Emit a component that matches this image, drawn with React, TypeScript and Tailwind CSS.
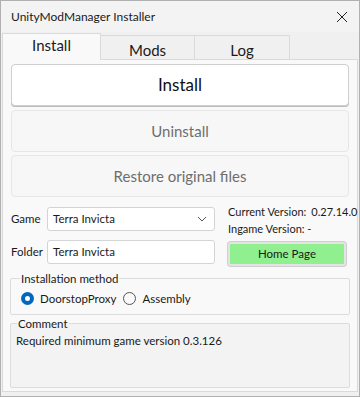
import React, { useState } from 'react';

const font = { fontFamily: 'Lato, "Liberation Sans", Arial, sans-serif' };

export default function App() {
  const [tab, setTab] = useState('Install');
  const [method, setMethod] = useState('DoorstopProxy');

  const tabs = ['Install', 'Mods', 'Log'];

  return (
    <div
      className="w-[360px] h-[397px] bg-[#f0f0f0] text-[#1a1a1a] flex flex-col overflow-hidden border border-[#b0b0b0]"
      style={font}
    >
      {/* title bar */}
      <div className="h-[31px] flex items-center justify-between pl-[10px] pr-[10px] bg-[#f3f3f3] shrink-0">
        <span className="text-[12px] text-[#1a1a1a]">UnityModManager Installer</span>
        <svg width="12" height="12" viewBox="0 0 12 12" className="mr-[1px]">
          <path d="M1 1 L11 11 M11 1 L1 11" stroke="#222" strokeWidth="1" />
        </svg>
      </div>

      {/* tabs */}
      <div className="flex items-end pl-[1px] h-[27px] shrink-0">
        {tabs.map((t) => (
          <button
            key={t}
            onClick={() => setTab(t)}
            className={
              t === tab
                ? 'w-[99px] h-[27px] bg-[#f9f9f9] border border-b-0 border-[#dadada] text-[15px] relative z-10 -mb-[1px] pb-[3px]'
                : t === 'Mods'
                ? 'w-[94px] h-[24px] bg-[#f0f0f0] border border-b-0 border-l-0 border-[#dadada] text-[15px] pt-[3px]'
                : 'w-[95px] h-[24px] bg-[#f0f0f0] border border-b-0 border-l-0 border-[#dadada] text-[15px] pt-[3px]'
            }
          >
            {t}
          </button>
        ))}
      </div>

      {/* tab page */}
      <div className="flex-1 mx-[1px] mb-[4px] bg-[#f9f9f9] border border-[#dadada] px-[8px] pt-[4px] flex flex-col">
        <button className="h-[42px] w-full bg-white border border-[#cfcfcf] rounded-[4px] shadow-[0_1px_0_#bdbdbd] text-[17px] text-[#111]">
          Install
        </button>
        <button className="mt-[4px] h-[42px] w-full bg-[#f7f7f7] border border-[#e6e6e6] rounded-[4px] text-[15px] text-[#6e6e6e]">
          Uninstall
        </button>
        <button className="mt-[3px] h-[42px] w-full bg-[#f7f7f7] border border-[#e6e6e6] rounded-[4px] text-[15px] text-[#6e6e6e]">
          Restore original files
        </button>

        <div className="mt-[10px] flex">
          <div className="w-[204px] shrink-0 flex flex-col gap-[9px]">
            <div className="flex items-center">
              <span className="w-[36px] text-[11.5px]">Game</span>
              <div className="flex-1 h-[24px] bg-white border border-[#d4d4d4] rounded-[3px] flex items-center justify-between pl-[5px] pr-[7px]">
                <span className="text-[11.5px]">Terra Invicta</span>
                <svg width="10" height="6" viewBox="0 0 10 6">
                  <path d="M1 1 L5 5 L9 1" fill="none" stroke="#555" strokeWidth="1" />
                </svg>
              </div>
            </div>
            <div className="flex items-center">
              <span className="w-[36px] text-[11.5px]">Folder</span>
              <div className="flex-1 h-[24px] bg-white border border-[#d4d4d4] rounded-[3px] flex items-center pl-[5px]">
                <span className="text-[11.5px]">Terra Invicta</span>
              </div>
            </div>
          </div>
          <div className="ml-[13px] -mr-[6px] flex-1 flex flex-col">
            <div className="text-[11px] leading-[17px] -mt-[4px] whitespace-nowrap">
              Current Version:<span className="ml-[5px]">0.27.14.0</span>
            </div>
            <div className="text-[11px] leading-[17px] whitespace-nowrap">Ingame Version: -</div>
            <button className="mt-[5px] w-[118px] h-[24px] bg-[#90f090] border-[2px] border-[#e4e4e4] rounded-[3px] text-[11.5px] shadow-[0_0_0_1px_#cfcfcf]">
              Home Page
            </button>
          </div>
        </div>

        <fieldset className="mt-[4px] mx-[-1px] border border-[#dcdcdc] rounded-[2px] px-[10px] pb-[6px] pt-0">
          <legend className="text-[11.5px] px-[1px] ml-[-1px]">Installation method</legend>
          <div className="flex items-center text-[11.5px] mt-[3px]">
            <label className="flex items-center cursor-default" onClick={() => setMethod('DoorstopProxy')}>
              <span
                className={
                  method === 'DoorstopProxy'
                    ? 'w-[13px] h-[13px] rounded-full bg-[#0067c0] flex items-center justify-center'
                    : 'w-[13px] h-[13px] rounded-full border border-[#555] bg-[#f9f9f9]'
                }
              >
                {method === 'DoorstopProxy' && <span className="w-[5px] h-[5px] rounded-full bg-white" />}
              </span>
              <span className="ml-[6px]">DoorstopProxy</span>
            </label>
            <label className="flex items-center ml-[7px] cursor-default" onClick={() => setMethod('Assembly')}>
              <span
                className={
                  method === 'Assembly'
                    ? 'w-[13px] h-[13px] rounded-full bg-[#0067c0] flex items-center justify-center'
                    : 'w-[13px] h-[13px] rounded-full border border-[#555] bg-[#f9f9f9]'
                }
              >
                {method === 'Assembly' && <span className="w-[5px] h-[5px] rounded-full bg-white" />}
              </span>
              <span className="ml-[6px]">Assembly</span>
            </label>
          </div>
        </fieldset>

        <fieldset className="mt-0 mx-[-1px] mb-[3px] flex-1 border border-[#dcdcdc] rounded-[2px] px-[5px] pt-0 bg-[#f3f3f3]">
          <legend className="text-[11.5px] px-[1px] ml-[1px]">Comment</legend>
          <div className="text-[11.5px] mt-0">Required minimum game version 0.3.126</div>
        </fieldset>
      </div>
    </div>
  );
}
